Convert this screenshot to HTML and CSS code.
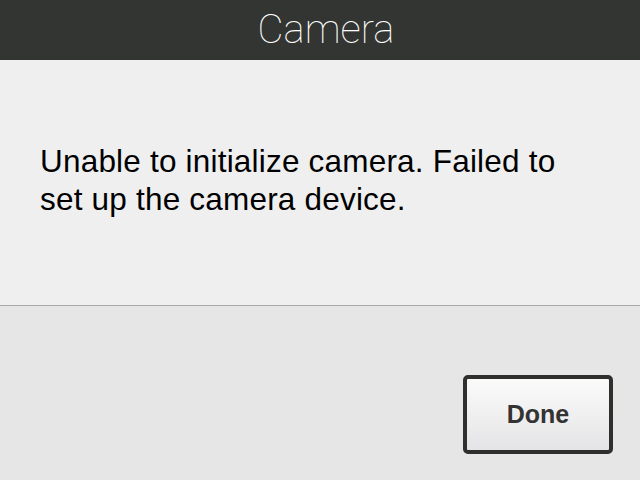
FILE: index.html
```html
<!DOCTYPE html>
<html lang="en">
<head>
    <meta charset="UTF-8">
    <title>Camera</title>
    <link rel="stylesheet" href="styles.css">
</head>
<body>
<div class="dialog">
  <div class="title-bar">
    <h1 class="title">Camera</h1>
  </div>
  <div class="message">
    <p class="message-text">Unable to initialize camera. Failed to set up the camera device.</p>
  </div>
  <div class="actions">
    <button type="button" class="done-btn">Done</button>
  </div>
</div>
</body>
</html>
```

FILE: styles.css
```css
html, body{
  margin: 0;
  padding: 0;
}

.dialog{
  width: 640px;
  height: 480px;
  display: flex;
  flex-direction: column;
  background-color: #e6e6e6;
  font-family: "Liberation Sans", Arial, sans-serif;
}

.title-bar{
  height: 60px;
  background-color: #333532;
  text-align: center;
}

.title{
  margin: 0;
  padding-left: 12px;
  font-family: Roboto, "Liberation Sans", sans-serif;
  font-weight: 100;
  font-size: 40px;
  line-height: 60px;
  color: #ffffff;
}

.message{
  height: 246px;
  box-sizing: border-box;
  padding: 82px 40px 0 40px;
  background-color: #efefef;
  border-bottom: 1px solid #a8a8a8;
}

.message-text{
  margin: 0;
  width: 530px;
  font-size: 31.5px;
  letter-spacing: 0.2px;
  line-height: 38px;
  color: #000000;
}

.actions{
  flex: 1;
  display: flex;
  justify-content: flex-end;
  align-items: flex-end;
  padding: 0 27px 26px 0;
}

.done-btn{
  width: 150px;
  height: 79px;
  border: 4px solid #2f302e;
  border-radius: 5px;
  background: linear-gradient(#fbfbfb, #e4e4e6);
  font-family: "Liberation Sans", Arial, sans-serif;
  font-weight: bold;
  font-size: 25px;
  color: #333333;
  padding: 0;
}
```
